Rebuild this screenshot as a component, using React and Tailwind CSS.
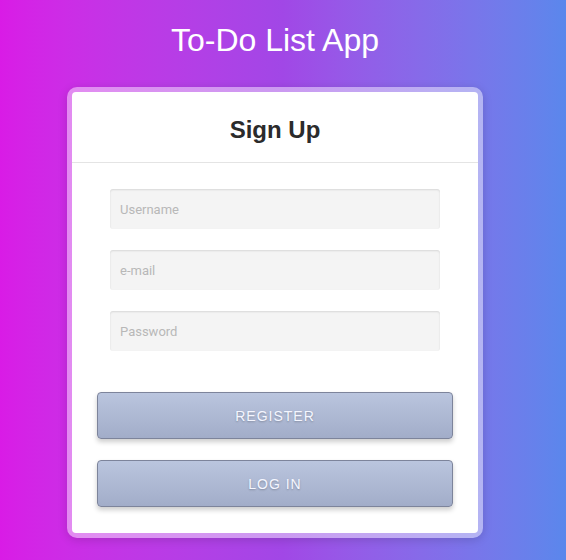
import React from "react";

function Field({ placeholder, type = "text" }) {
  return (
    <input
      type={type}
      placeholder={placeholder}
      className="h-[40px] w-[330px] rounded-[3px] bg-[#f4f4f4] px-[10px] font-['Roboto',sans-serif] text-[13px] text-[#444] shadow-[inset_0_1px_2px_rgba(0,0,0,0.12)] outline-none placeholder:text-[#b8b8b8]"
    />
  );
}

function Button({ children }) {
  return (
    <button
      type="button"
      className="h-[47px] w-[356px] rounded-[4px] border border-[#7d849b] bg-gradient-to-b from-[#bac5de] to-[#a2adc9] pt-[2px] font-['Liberation_Sans',Arial,sans-serif] text-[14px] tracking-[1px] text-[#f4f6ff] uppercase shadow-[0_3px_5px_rgba(0,0,0,0.2)] [text-shadow:0_1px_2px_rgba(0,0,0,0.25)]"
    >
      {children}
    </button>
  );
}

export default function App() {
  return (
    <div className="min-h-[560px] w-full bg-gradient-to-r from-[#d91be6] via-[#a147e6] to-[#5a87ec] font-['Liberation_Sans',Arial,sans-serif]">
      <div className="flex w-[550px] flex-col items-center">
        <h1 className="pt-[21px] text-[32px] leading-[38px] text-white">To-Do List App</h1>

        <div className="mt-[28px] w-[416px] rounded-[10px] bg-white/45 p-[5px] shadow-[0_2px_10px_rgba(0,0,0,0.15)]">
          <div className="rounded-[4px] bg-white">
            <div className="flex h-[71px] items-center justify-center border-b border-[#e4e4e4] pt-[5px]">
              <h2 className="text-[24px] font-bold text-[#2b2b2b]">Sign Up</h2>
            </div>

            <div className="flex flex-col items-center gap-[21px] pt-[26px]">
              <Field placeholder="Username" />
              <Field placeholder="e-mail" type="email" />
              <Field placeholder="Password" type="password" />
            </div>

            <div className="flex flex-col items-center gap-[21px] pt-[41px] pb-[26px]">
              <Button>Register</Button>
              <Button>Log In</Button>
            </div>
          </div>
        </div>
      </div>
    </div>
  );
}
